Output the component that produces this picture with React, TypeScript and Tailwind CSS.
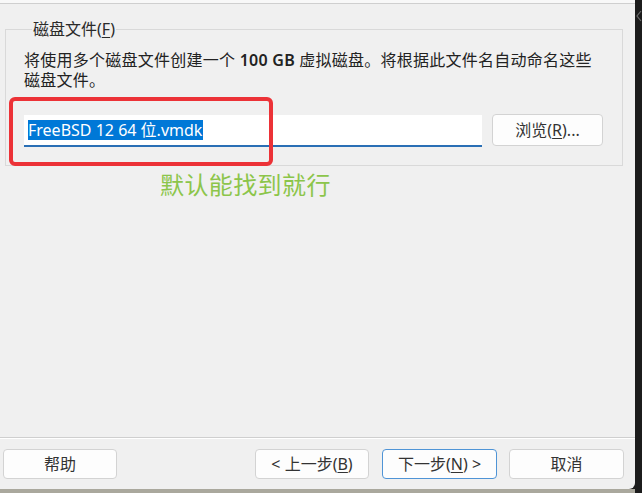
import React from "react";

const ui = {
  fontFamily: '"Noto Sans", "Noto Sans CJK SC", sans-serif',
};

function WinButton({
  children,
  width,
  primary,
}: {
  children: React.ReactNode;
  width: string;
  primary?: boolean;
}) {
  return (
    <button
      className={`${width} h-[30px] rounded-[4px] bg-[#fdfdfd] text-[16px] leading-[20px] text-[#333] flex items-center justify-center border ${
        primary ? "border-[#4f94d6]" : "border-[#d3d3d3]"
      }`}
    >
      {children}
    </button>
  );
}

export default function App() {
  return (
    <div className="w-[642px] h-[493px] flex bg-[#1c1c1c] overflow-hidden" style={ui}>
      <div className="w-[635px] flex flex-col">
        {/* dialog window */}
        <div className="h-[489px] flex flex-col bg-[#f0f0f0] rounded-br-[6px]">
          <div className="h-[4px] bg-[#f8f8f8] border-b border-[#cfcfcf]" />

          {/* group box */}
          <fieldset className="ml-[5px] mt-[15px] w-[618px] border border-[#d9d9d9] px-[18px] pb-[18px]">
            <legend className="ml-[8px] px-[1px] text-[16px] leading-[20px] text-[#2a2a2a]">
              磁盘文件(<span className="underline underline-offset-2">F</span>)
            </legend>
            <p className="mt-[11px] text-[16px] leading-[20px] text-[#222] whitespace-nowrap tracking-[0.25px]">
              将使用多个磁盘文件创建一个 <span className="font-semibold">100 GB</span> 虚拟磁盘。将根据此文件名自动命名这些
              <br />
              磁盘文件。
            </p>
            <div className="relative mt-[24px] flex items-start gap-[10px]">
              <div className="mt-[1px] w-[458px] h-[32px] bg-white border-b-2 border-[#2a6fb5] pl-[4px] pt-[3px]">
                <span className="bg-[#0078d7] text-white text-[16px] leading-[20px] inline-block pr-[1px]">
                  FreeBSD 12 64 位.vmdk
                </span>
              </div>
              <button className="w-[111px] h-[32px] rounded-[4px] bg-[#fdfdfd] border border-[#d3d3d3] text-[16px] leading-[20px] text-[#333]">
                浏览(<span className="underline underline-offset-2">R</span>)...
              </button>
              {/* annotation frame */}
              <div className="absolute left-[-15px] top-[-17px] w-[264px] h-[69px] border-4 border-[#ec3237] rounded-[6px] pointer-events-none" />
            </div>
          </fieldset>

          <div className="ml-[160px] mt-[5px] text-[24px] leading-[28px] tracking-[0.4px] text-[#8cc54a]">
            默认能找到就行
          </div>

          <div className="flex-1" />

          <div className="h-[2px] border-t border-[#cfcfcf] border-b border-b-white" />
          <div className="flex items-center pl-[3px] pr-[11px] mt-[10px] mb-[10px]">
            <WinButton width="w-[114px]">帮助</WinButton>
            <div className="flex-1" />
            <WinButton width="w-[114px]">
              &lt; 上一步(<span className="underline underline-offset-2">B</span>)
            </WinButton>
            <div className="w-[13px]" />
            <WinButton width="w-[115px]" primary>
              下一步(<span className="underline underline-offset-2">N</span>) &gt;
            </WinButton>
            <div className="w-[12px]" />
            <WinButton width="w-[115px]">取消</WinButton>
          </div>
        </div>
        <div className="flex-1 bg-[#aaa89d]" />
      </div>

      {/* dark desktop edge */}
      <div className="flex-1 flex flex-col items-center pt-[10px]">
        <svg width="6" height="12" viewBox="0 0 6 12">
          <path d="M5 1 L1 6 L5 11" stroke="#6a6a6a" strokeWidth="1.2" fill="none" />
        </svg>
      </div>
    </div>
  );
}
